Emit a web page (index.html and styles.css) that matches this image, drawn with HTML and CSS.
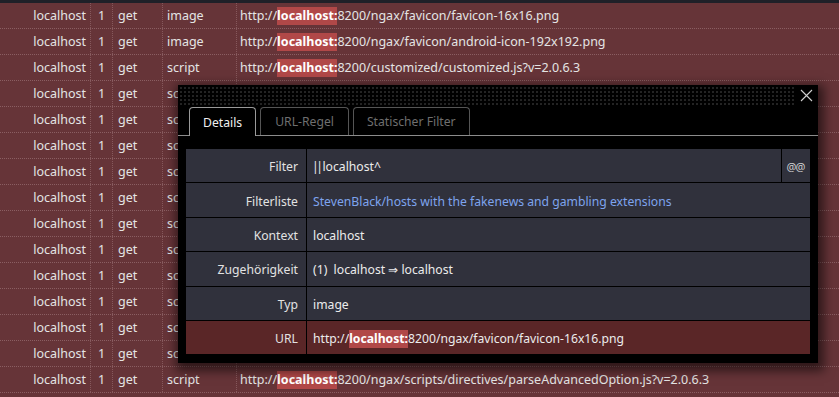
FILE: index.html
```html
<!DOCTYPE html>
<html lang="de">
<head>
  <meta charset="UTF-8" />
  <title>Logger</title>
  <link rel="stylesheet" href="styles.css">
</head>
<body>

  <div class="topbar"></div>

  <div class="liste">
    <div class="zeile"><span>localhost</span><span>1</span><span>get</span><span>image</span><span>http://<b class="treffer">localhost:</b>8200/ngax/favicon/favicon-16x16.png</span></div>
    <div class="zeile"><span>localhost</span><span>1</span><span>get</span><span>image</span><span>http://<b class="treffer">localhost:</b>8200/ngax/favicon/android-icon-192x192.png</span></div>
    <div class="zeile"><span>localhost</span><span>1</span><span>get</span><span>script</span><span>http://<b class="treffer">localhost:</b>8200/customized/customized.js?v=2.0.6.3</span></div>
    <div class="zeile"><span>localhost</span><span>1</span><span>get</span><span>script</span><span></span></div>
    <div class="zeile"><span>localhost</span><span>1</span><span>get</span><span>script</span><span></span></div>
    <div class="zeile"><span>localhost</span><span>1</span><span>get</span><span>script</span><span></span></div>
    <div class="zeile"><span>localhost</span><span>1</span><span>get</span><span>script</span><span></span></div>
    <div class="zeile"><span>localhost</span><span>1</span><span>get</span><span>script</span><span></span></div>
    <div class="zeile"><span>localhost</span><span>1</span><span>get</span><span>script</span><span></span></div>
    <div class="zeile"><span>localhost</span><span>1</span><span>get</span><span>script</span><span></span></div>
    <div class="zeile"><span>localhost</span><span>1</span><span>get</span><span>script</span><span></span></div>
    <div class="zeile"><span>localhost</span><span>1</span><span>get</span><span>script</span><span></span></div>
    <div class="zeile"><span>localhost</span><span>1</span><span>get</span><span>script</span><span></span></div>
    <div class="zeile"><span>localhost</span><span>1</span><span>get</span><span>script</span><span></span></div>
    <div class="zeile"><span>localhost</span><span>1</span><span>get</span><span>script</span><span>http://<b class="treffer">localhost:</b>8200/ngax/scripts/directives/parseAdvancedOption.js?v=2.0.6.3</span></div>
  </div>

  <!-- Dialog über der Liste -->
  <div class="dialog">
    <div class="kopf">
      <div class="punkte"></div>
      <div class="schliessen">
        <svg width="13" height="13" viewBox="0 0 13 13"><path d="M1 1L12 12M12 1L1 12" stroke="#d0d0d0" stroke-width="1.1" fill="none"/></svg>
      </div>
    </div>

    <div class="tabs">
      <div class="tab aktiv">Details</div>
      <div class="tab">URL-Regel</div>
      <div class="tab">Statischer Filter</div>
    </div>

    <div class="details">
      <div class="label">Filter</div>
      <div class="wert"><span class="pipes">||</span>localhost^</div>
      <div class="extra">@@</div>

      <div class="label">Filterliste</div>
      <div class="wert breit"><span class="link">StevenBlack/hosts with the fakenews and gambling extensions</span></div>

      <div class="label">Kontext</div>
      <div class="wert breit">localhost</div>

      <div class="label">Zugehörigkeit</div>
      <div class="wert breit">(1)&nbsp; localhost ⇒ localhost</div>

      <div class="label">Typ</div>
      <div class="wert breit">image</div>

      <div class="label rot">URL</div>
      <div class="wert breit rot">http://<b class="treffer">localhost:</b>8200/ngax/favicon/favicon-16x16.png</div>
    </div>
  </div>

</body>
</html>
```

FILE: styles.css
```css
* { box-sizing: border-box; }
html, body { height: 100%; }
body {
  margin: 0;
  background: #663438;
  color: #e4e4e4;
  font-family: "Noto Sans", sans-serif;
  font-size: 12.5px;
  overflow: hidden;
}
.topbar { height: 3px; background: #1f2028; }

.liste  { display: flex; flex-direction: column; }
.zeile {
  display: grid;
  grid-template-columns: 91px 22px 50px 74px 1fr;
  height: 26px;
  border-bottom: 1px dotted #8a5e62;
}
.zeile span {
  display: flex; align-items: center;
  white-space: nowrap;
  border-right: 1px dotted #86585c;
  padding: 0 4px;
}
.zeile span:nth-child(1) { justify-content: flex-end; padding-right: 4px; }
.zeile span:nth-child(2) { justify-content: center; }
.zeile span:nth-child(3) { padding-left: 5px; }
.zeile span:nth-child(5) { border-right: none; padding-left: 3px; }

.treffer {
  background: #b14848;
  color: #fff;
  font-weight: bold;
  line-height: 18px;
  display: inline-block;
}

.dialog {
  position: absolute;
  left: 178px; top: 85px;
  width: 640px; height: 278px;
  background: #000;
  box-shadow: 2px 4px 10px 4px rgba(0,0,0,.55);
  display: flex; flex-direction: column;
  font-size: 12.2px;
}
.kopf       { display: flex; height: 20px; }
.punkte {
  flex: 1;
  margin-right: 2px;
  background-image: radial-gradient(circle, #4c4c4c 0.6px, transparent 0.8px);
  background-size: 4px 4px;
  background-position: 1px 1px;
}
.schliessen { width: 21px; display: flex; align-items: center; justify-content: center; padding: 1px 3px 0 0; }

.tabs {
  display: flex; gap: 4px;
  margin-top: 2px;
  padding-left: 11px;
  height: 29px;
  border-bottom: 1px solid #8c8c8c;
}
.tab {
  display: flex; align-items: center;
  padding: 0 13px;
  border: 1px solid #555;
  border-bottom: none;
  border-radius: 4px 4px 0 0;
  color: #6f6f6f;
}
.tab:nth-child(2) { padding: 0 14px; }
.tab.aktiv {
  color: #f0f0f0;
  border-color: #9a9a9a;
  background: #000;
  margin-bottom: -1px;
}

.details {
  display: grid;
  grid-template-columns: 120px 1fr 28px;
  grid-auto-rows: 33.4px;
  gap: 1px;
  margin: 13px 8px 0 8px;
}
.label, .wert, .extra { background: #30313c; display: flex; align-items: center; white-space: nowrap; padding-top: 2px; }
.label  { justify-content: flex-end; padding-right: 8px; color: #e2e2e2; }
.wert   { padding-left: 6px; color: #ececec; }
.pipes  { letter-spacing: -2.5px; margin-left: -1px; margin-right: 2px; }
.breit  { grid-column: span 2; }
.extra  { justify-content: center; color: #cfcfcf; font-size: 11px; letter-spacing: -1px; padding-right: 1px; }
.link   { color: #7ea4ee; }
.rot    { background: #5a2627; }
```
